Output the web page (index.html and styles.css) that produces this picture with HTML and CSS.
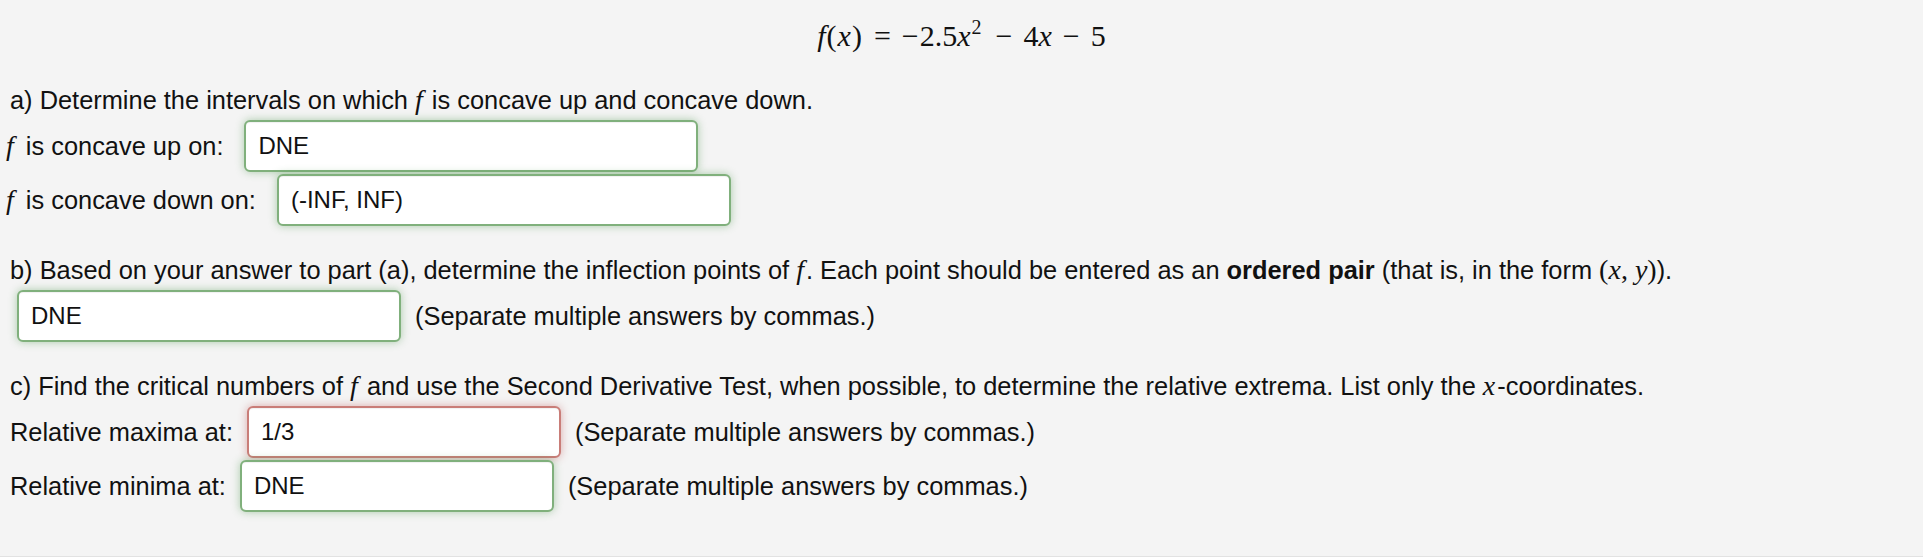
FILE: index.html
```html
<!DOCTYPE html>
<html lang="en">
<head>
    <meta charset="UTF-8">
    <meta name="viewport" content="width=device-width, initial-scale=1.0">
    <title>Concavity and Inflection Points</title>
    <link rel="stylesheet" href="styles.css">
</head>
<body>
    <div class="problem">
        <div class="formula">
            <span class="mi">f</span><span class="mo-paren">(</span><span class="mi">x</span><span class="mo-paren">)</span><span class="mo">=</span><span class="neg">&minus;</span>2.5<span class="mi">x</span><sup>2</sup><span class="mo">&minus;</span>4<span class="mi">x</span><span class="mo">&minus;</span>5
        </div>

        <!-- parte a -->
        <div class="section first">
            <p class="prompt">a) Determine the intervals on which <span class="m">f</span> is concave up and concave down.</p>
            <div class="answer-row">
                <label for="up" class="flabel"><span class="m">f</span> is concave up on:</label>
                <input type="text" id="up" class="ans correct w-lg" value="DNE">
            </div>
            <div class="answer-row">
                <label for="down" class="flabel"><span class="m">f</span> is concave down on:</label>
                <input type="text" id="down" class="ans correct w-lg" value="(-INF, INF)">
            </div>
        </div>

        <!-- parte b -->
        <div class="section">
            <p class="prompt">b) Based on your answer to part (a), determine the inflection points of <span class="m">f</span>. Each point should be entered as an <b>ordered pair</b> (that is, in the form <span class="ms">(<i>x</i>, <i>y</i>)</span>).</p>
            <div class="answer-row indent">
                <input type="text" id="inflexao" class="ans correct w-md" value="DNE">
                <span class="hint">(Separate multiple answers by commas.)</span>
            </div>
        </div>

        <!-- parte c -->
        <div class="section">
            <p class="prompt">c) Find the critical numbers of <span class="m">f</span> and use the Second Derivative Test, when possible, to determine the relative extrema. List only the <span class="m">x</span>-coordinates.</p>
            <div class="answer-row">
                <label for="maxima">Relative maxima at:</label>
                <input type="text" id="maxima" class="ans incorrect w-sm" value="1/3">
                <span class="hint">(Separate multiple answers by commas.)</span>
            </div>
            <div class="answer-row">
                <label for="minima">Relative minima at:</label>
                <input type="text" id="minima" class="ans correct w-sm" value="DNE">
                <span class="hint">(Separate multiple answers by commas.)</span>
            </div>
        </div>
    </div>
</body>
</html>
```

FILE: styles.css
```css
body {
    font-family: "Liberation Sans", Arial, Helvetica, sans-serif;
    font-size: 25.4px;
    color: #111;
    background-color: #f4f4f4;
    margin: 0;
}
.problem {
    padding: 21px 10px 42px 10px;
    border-bottom: 3px solid #e2e2e2;
}
.formula {
    font-family: "Liberation Serif", "Times New Roman", serif;
    font-size: 30px;
    line-height: 30px;
    text-align: center;
}
.formula .mi {
    font-style: italic;
}
.formula .mo-paren {
    margin: 0 1px;
}
.formula .mo {
    margin: 0 11px;
}
.formula .neg {
    margin-right: 1px;
}
.formula sup {
    font-size: 20px;
    line-height: 0;
    vertical-align: 12px;
    margin-left: 1px;
    margin-right: 3px;
}
.section {
    margin-top: 30px;
}
.section.first {
    margin-top: 35px;
}
.prompt {
    margin: 0 0 6px 0;
    line-height: 28px;
}
.m {
    font-family: "Liberation Serif", "Times New Roman", serif;
    font-style: italic;
    font-size: 28px;
    line-height: 0;
    margin-right: 2px;
}
.ms {
    font-family: "Liberation Serif", "Times New Roman", serif;
    font-size: 28px;
    line-height: 0;
}
.answer-row {
    display: flex;
    align-items: center;
    gap: 14px;
    margin-bottom: 2px;
}
.answer-row label {
    white-space: nowrap;
}
.answer-row label.flabel {
    margin-left: -4px;
    margin-right: 7px;
}
.answer-row label .m {
    margin-right: 5px;
}
.answer-row.indent {
    padding-left: 7px;
}
.ans {
    box-sizing: border-box;
    height: 52px;
    padding: 0 12px;
    font-family: inherit;
    font-size: 24px;
    color: #111;
    background-color: #fff;
    border: 2px solid #ccc;
    border-radius: 6px;
    outline: none;
}
.ans.correct {
    border-color: #80b07c;
    box-shadow: inset 0 1px 1px rgba(0,0,0,0.06), 0 0 8px rgba(81,153,81,0.45);
}
.ans.incorrect {
    border-color: #c97d78;
    box-shadow: inset 0 1px 1px rgba(0,0,0,0.06), 0 0 8px rgba(191,84,84,0.45);
}
.w-lg {
    width: 454px;
}
.w-md {
    width: 384px;
}
.w-sm {
    width: 314px;
}
.hint {
    white-space: nowrap;
}
```
